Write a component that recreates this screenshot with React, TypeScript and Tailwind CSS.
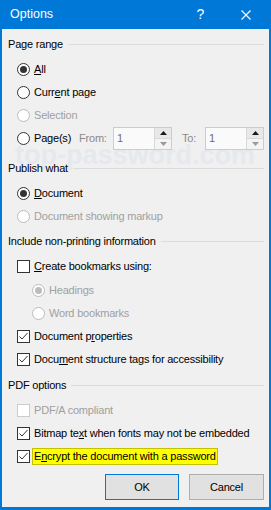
import type { ReactNode } from 'react';

const font = { fontFamily: '"Segoe UI", "Liberation Sans", Arial, sans-serif' };

function Radio({ checked = false, disabled = false }: { checked?: boolean; disabled?: boolean }) {
  return (
    <span
      className={`flex h-[13px] w-[13px] shrink-0 items-center justify-center rounded-full border bg-white ${
        disabled ? 'border-[#bcbcbc]' : 'border-[#333333]'
      }`}
    >
      {checked && (
        <span className={`h-[7px] w-[7px] rounded-full ${disabled ? 'bg-[#bcbcbc]' : 'bg-[#333333]'}`} />
      )}
    </span>
  );
}

function Check({ checked = false, disabled = false }: { checked?: boolean; disabled?: boolean }) {
  return (
    <span
      className={`flex h-[13px] w-[13px] shrink-0 items-center justify-center border bg-white ${
        disabled ? 'border-[#cccccc]' : 'border-[#333333]'
      }`}
    >
      {checked && (
        <svg width="11" height="11" viewBox="0 0 11 11">
          <polyline points="1.5,5.5 4,8 9.5,2" fill="none" stroke="#333333" strokeWidth="1" />
        </svg>
      )}
    </span>
  );
}

function Header({ children, className = '' }: { children: ReactNode; className?: string }) {
  return (
    <div className={`flex h-[23px] items-center ${className}`}>
      <span className="text-black">{children}</span>
      <span className="ml-[5px] h-px flex-1 bg-[#dcdcdc]" />
    </div>
  );
}

function Row({ children, indent = false, className = '' }: { children: ReactNode; indent?: boolean; className?: string }) {
  return (
    <div className={`flex h-[23px] items-center gap-[4px] ${indent ? 'pl-[24px]' : 'pl-[9px]'} ${className}`}>
      {children}
    </div>
  );
}

function Spin() {
  return (
    <div className="flex h-[23px] w-[59px] shrink-0 border border-[#cccccc] bg-[#fafafa]">
      <div className="flex flex-1 items-center pl-[3px] text-[#6d6d6d]">1</div>
      <div className="flex w-[17px] flex-col border-l border-[#d9d9d9] bg-[#f0f0f0]">
        <div className="flex flex-1 items-center justify-center border-b border-[#d9d9d9] bg-[#e8e8e8]">
          <svg width="7" height="4" viewBox="0 0 7 4">
            <polygon points="3.5,0 7,4 0,4" fill="#1a1a1a" />
          </svg>
        </div>
        <div className="flex flex-1 items-center justify-center bg-[#f4f4f4]">
          <svg width="7" height="4" viewBox="0 0 7 4">
            <polygon points="0,0 7,0 3.5,4" fill="#9a9a9a" />
          </svg>
        </div>
      </div>
    </div>
  );
}

export default function App() {
  return (
    <div
      className="relative flex h-[510px] w-[271px] flex-col bg-[#0078d7] px-[2px] pb-[3px] text-[11px] tracking-[-0.2px] text-black"
      style={font}
    >
      {/* title bar */}
      <div className="flex h-[29px] shrink-0 items-center text-white">
        <span className="ml-[8px] text-[12.5px] tracking-normal">Options</span>
        <span className="ml-auto mr-[37px] text-[14px]">?</span>
        <svg className="mr-[18px]" width="10" height="10" viewBox="0 0 10 10">
          <path d="M0.5 0.5 L9.5 9.5 M9.5 0.5 L0.5 9.5" stroke="#ffffff" strokeWidth="1.1" />
        </svg>
      </div>

      {/* body */}
      <div className="relative flex flex-1 flex-col bg-[#f0f0f0] pl-[6px] pr-[5px] pt-[4px]">
        {/* watermark */}
        <div className="pointer-events-none absolute left-[13px] top-[116px] select-none text-[27px] font-bold leading-[20px] tracking-normal text-[#e5e9ee]">
          top-password.com
        </div>

        <div className="relative flex flex-col">
          <Header>Page range</Header>
          <Row className="mt-[2px]">
            <Radio checked />
            <span>
              <u>A</u>ll
            </span>
          </Row>
          <Row>
            <Radio />
            <span>
              Curr<u>e</u>nt page
            </span>
          </Row>
          <Row>
            <Radio disabled />
            <span className="text-[#a0a0a0]">Selection</span>
          </Row>
          <Row>
            <Radio />
            <span className="w-[41px]">
              Pa<u>g</u>e(s)
            </span>
            <span className="w-[30px] text-[#8a8a8a]">From:</span>
            <Spin />
            <span className="ml-[6px] w-[19px] text-[#8a8a8a]">To:</span>
            <Spin />
          </Row>

          <Header className="mt-[7px]">Publish what</Header>
          <Row className="mt-[2px]">
            <Radio checked />
            <span>
              <u>D</u>ocument
            </span>
          </Row>
          <Row>
            <Radio disabled />
            <span className="text-[#a0a0a0]">Document showing markup</span>
          </Row>

          <Header className="mt-[2px]">Include non-printing information</Header>
          <Row className="mt-[2px]">
            <Check />
            <span>
              <u>C</u>reate bookmarks using:
            </span>
          </Row>
          <Row indent className="mt-[1px]">
            <Radio checked disabled />
            <span className="text-[#a0a0a0]">Headings</span>
          </Row>
          <Row indent>
            <Radio disabled />
            <span className="text-[#a0a0a0]">Word bookmarks</span>
          </Row>
          <Row>
            <Check checked />
            <span>
              Document p<u>r</u>operties
            </span>
          </Row>
          <Row>
            <Check checked />
            <span>
              Docu<u>m</u>ent structure tags for accessibility
            </span>
          </Row>

          <Header className="mt-[3px]">PDF options</Header>
          <Row className="mt-[2px]">
            <Check disabled />
            <span className="text-[#a0a0a0]">PDF/A compliant</span>
          </Row>
          <Row>
            <Check checked />
            <span>
              Bitmap te<u>x</u>t when fonts may not be embedded
            </span>
          </Row>
          <Row>
            <Check checked />
            <span className="-ml-[2px] flex h-[17px] items-center border border-[#c2c200] bg-[#ffff00] px-[1px]">
              E<u>n</u>crypt the document with a password
            </span>
          </Row>

          <div className="mt-[6px] flex justify-end gap-[10px]">
            <button className="h-[26px] w-[74px] border border-[#0078d7] bg-[#e1e1e1] text-[11px]">OK</button>
            <button className="h-[26px] w-[75px] border border-[#adadad] bg-[#e1e1e1] text-[11px]">Cancel</button>
          </div>
        </div>
      </div>
    </div>
  );
}
